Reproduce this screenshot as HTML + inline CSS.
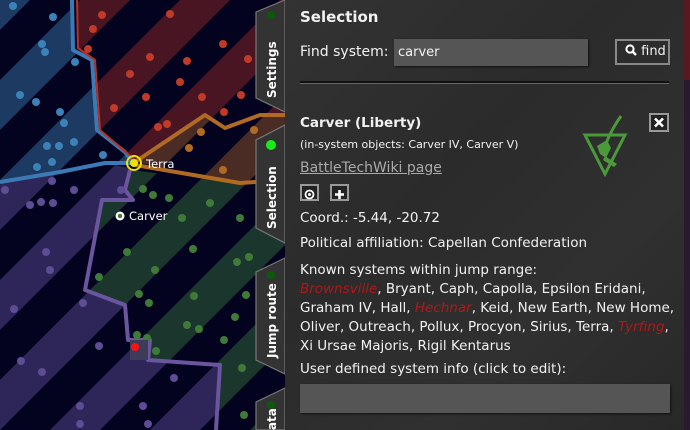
<!DOCTYPE html>
<html><head><meta charset="utf-8"><style>
*{margin:0;padding:0;box-sizing:border-box}
html,body{width:690px;height:430px;overflow:hidden}
body{background:#03031f;font-family:"DejaVu Sans","Liberation Sans",sans-serif;position:relative}
#map{position:absolute;left:0;top:0}
#panel{position:absolute;left:285px;top:0;width:399px;height:430px;overflow:hidden;background:linear-gradient(135deg,#333 0%,#2b2b2b 40%,#303030 70%,#282828 100%);color:#f2f2f2}
.t{position:absolute;white-space:nowrap}
.red{color:#b01818;font-style:italic}
</style></head><body>
<svg id="map" width="690" height="430" viewBox="0 0 690 430">
<rect width="690" height="430" fill="#03031f"/>
<polygon points="0,0 72,0 73,50 92,60 97,130 125,152 133,163 105,163 60,172 0,182" fill="#1c3a62"/>
<polygon points="76,0 285,0 285,115 260,115 225,128 205,115 135,160 100,130 95,60 78,48" fill="#4a1522"/>
<polygon points="135,162 205,115 225,128 260,115 285,115 285,180 240,183" fill="#4a2c24"/>
<polygon points="130,170 240,183 285,180 285,430 215,430 220,365 148,360 150,340 128,340 125,305 85,290 102,200 133,200 125,190" fill="#1b362c"/>
<polygon points="0,182 60,172 105,163 130,168 125,190 133,200 102,200 85,290 125,305 128,340 150,340 148,360 220,365 215,430 0,430" fill="#2e2658"/>
<g fill="#03031f">
<polygon points="0,30 30,0 80,0 0,80"/>
<polygon points="0,130 130,0 180,0 0,180"/>
<polygon points="0,230 230,0 280,0 0,280"/>
<polygon points="0,330 285,45 285,95 0,380"/>
<polygon points="0,430 285,145 285,195 50,430"/>
<polygon points="100,430 285,245 285,295 150,430"/>
<polygon points="200,430 285,345 285,395 250,430"/>
</g>
<g fill="none" stroke-width="4" stroke-linejoin="round">
<polyline points="72,0 73,50 92,60 97,130 125,152 133,163 105,163 60,172 0,182" stroke="#3b7ab5"/>
<polyline points="77,0 78,48 95,60 100,130 135,160" stroke="#b83020" stroke-width="2"/>
<polyline points="135,162 205,115 225,128 260,115 285,115" stroke="#b06a22"/>
<polyline points="135,165 240,183 285,180" stroke="#b06a22"/>
<polyline points="130,170 125,190 133,200 102,200 85,290 125,305 128,340 150,340 148,360 220,365 216,430" stroke="#6a559e"/>
</g>
<g fill="#3b82b8"><circle cx="53" cy="17" r="4"/><circle cx="42" cy="44" r="4"/><circle cx="45" cy="52" r="4"/><circle cx="75" cy="62" r="4"/><circle cx="20" cy="95" r="4"/><circle cx="36" cy="102" r="4"/><circle cx="60" cy="112" r="4"/><circle cx="64" cy="123" r="4"/><circle cx="47" cy="146" r="4"/><circle cx="59" cy="146" r="4"/><circle cx="74" cy="142" r="4"/><circle cx="37" cy="167" r="4"/><circle cx="52" cy="162" r="4"/><circle cx="103" cy="155" r="4"/><circle cx="13" cy="6" r="4"/></g>
<g fill="#c03a28"><circle cx="102" cy="15" r="4"/><circle cx="170" cy="14" r="4"/><circle cx="93" cy="29" r="4"/><circle cx="88" cy="49" r="4"/><circle cx="150" cy="57" r="4"/><circle cx="187" cy="61" r="4"/><circle cx="223" cy="44" r="4"/><circle cx="248" cy="59" r="4"/><circle cx="130" cy="74" r="4"/><circle cx="180" cy="82" r="4"/><circle cx="146" cy="97" r="4"/><circle cx="202" cy="97" r="4"/><circle cx="241" cy="95" r="4"/><circle cx="114" cy="108" r="4"/><circle cx="224" cy="112" r="4"/><circle cx="158" cy="127" r="4"/><circle cx="167" cy="124" r="4"/></g>
<g fill="#b06a22"><circle cx="201" cy="132" r="4"/><circle cx="254" cy="130" r="4"/><circle cx="189" cy="148" r="4"/><circle cx="223" cy="170" r="4"/></g>
<g fill="#3f7a38"><circle cx="143" cy="189" r="4"/><circle cx="153" cy="195" r="4"/><circle cx="169" cy="198" r="4"/><circle cx="210" cy="203" r="4"/><circle cx="182" cy="218" r="4"/><circle cx="240" cy="218" r="4"/><circle cx="127" cy="252" r="4"/><circle cx="193" cy="249" r="4"/><circle cx="237" cy="262" r="4"/><circle cx="249" cy="257" r="4"/><circle cx="155" cy="270" r="4"/><circle cx="99" cy="277" r="4"/><circle cx="139" cy="294" r="4"/><circle cx="149" cy="303" r="4"/><circle cx="194" cy="296" r="4"/><circle cx="246" cy="295" r="4"/><circle cx="187" cy="325" r="4"/><circle cx="199" cy="329" r="4"/><circle cx="235" cy="317" r="4"/><circle cx="224" cy="340" r="4"/><circle cx="137" cy="335" r="4"/><circle cx="147" cy="338" r="4"/><circle cx="156" cy="351" r="4"/><circle cx="242" cy="368" r="4"/><circle cx="244" cy="415" r="4"/></g>
<g fill="#5e4c94"><circle cx="5" cy="190" r="4"/><circle cx="52" cy="181" r="4"/><circle cx="74" cy="190" r="4"/><circle cx="30" cy="205" r="4"/><circle cx="41" cy="202" r="4"/><circle cx="53" cy="203" r="4"/><circle cx="121" cy="190" r="4"/><circle cx="46" cy="252" r="4"/><circle cx="50" cy="270" r="4"/><circle cx="83" cy="303" r="4"/><circle cx="14" cy="309" r="4"/><circle cx="99" cy="346" r="4"/><circle cx="21" cy="361" r="4"/><circle cx="42" cy="372" r="4"/><circle cx="174" cy="378" r="4"/><circle cx="80" cy="406" r="4"/><circle cx="143" cy="406" r="4"/><circle cx="80" cy="424" r="4"/><circle cx="148" cy="424" r="4"/></g>
<rect x="130" y="340" width="18" height="20" fill="#3c3c58"/>
<circle cx="135" cy="347" r="4" fill="#ff1010"/>
<circle cx="134" cy="163" r="7" fill="none" stroke="#f0e000" stroke-width="2"/>
<circle cx="134" cy="163" r="4" fill="#f0e000"/>
<text x="146" y="168" fill="#fff" font-family="DejaVu Sans, sans-serif" font-size="11.5">Terra</text>
<circle cx="120" cy="216" r="4.5" fill="#fff"/><circle cx="120" cy="216" r="2.2" fill="#3f7a38"/>
<text x="129" y="220" fill="#fff" font-family="DejaVu Sans, sans-serif" font-size="11.5">Carver</text>
<rect x="684" y="0" width="6" height="430" fill="#2a1a30"/>
<rect x="684" y="0" width="6" height="80" fill="#5a1820"/>
<g stroke="#777" stroke-width="1.2" fill="#333">
<polygon points="285,0 256,12 256,98 285,112"/>
<polygon points="285,125 256,140 256,228 285,243"/>
<polygon points="285,258 256,272 256,360 285,374"/>
<polygon points="285,388 256,402 256,430 285,430"/>
</g>
<circle cx="271" cy="15" r="4" fill="#0b5a0b"/>
<circle cx="271" cy="145" r="5" fill="#1aea1a"/>
<circle cx="271" cy="275" r="4" fill="#0b5a0b"/>
<circle cx="271" cy="405" r="4" fill="#0b5a0b"/>
<g fill="#fff" font-family="DejaVu Sans, sans-serif" font-size="12" font-weight="bold">
<text transform="translate(276,98) rotate(-90)">Settings</text>
<text transform="translate(276,229) rotate(-90)">Selection</text>
<text transform="translate(276,358) rotate(-90)">Jump route</text>
<text transform="translate(276,440) rotate(-90)">Data</text>
</g>
</svg>
<div id="panel">
<div class="t" style="left:15px;top:8px;font-size:15px;font-weight:bold">Selection</div>
<div class="t" style="left:15px;top:44px;font-size:14px">Find system:</div>
<div class="t" style="left:109px;top:39px;width:194px;height:27px;background:#555;box-shadow:1px 1px 2px #111;font-size:13px;padding:6px 4px">carver</div>
<div class="t" style="left:330px;top:39px;width:55px;height:26px;border:2px solid #888;font-size:13px;padding:3px 0 0 8px"><svg width="12" height="12" viewBox="0 0 12 12" style="vertical-align:-1px"><circle cx="5" cy="5" r="3.6" fill="none" stroke="#fff" stroke-width="2"/><line x1="7.5" y1="7.5" x2="11" y2="11" stroke="#fff" stroke-width="2.4"/></svg> find</div>
<div class="t" style="left:15px;top:81px;width:369px;height:3px;background:#111;border-bottom:1px solid #666"></div>
<div class="t" style="left:15px;top:115px;font-size:13.5px;font-weight:bold">Carver (Liberty)</div>
<div class="t" style="left:15px;top:138px;font-size:11px">(in-system objects: Carver IV, Carver V)</div>
<div class="t" style="left:15px;top:160px;font-size:14px;color:#aaa;text-decoration:underline">BattleTechWiki page</div>
<div class="t" style="left:15px;top:184px;width:19px;height:17px;border:2px solid #999;background:#222"><svg width="15" height="13" viewBox="0 0 15 13"><circle cx="7.5" cy="6.5" r="4" fill="none" stroke="#fff" stroke-width="1.8"/><circle cx="7.5" cy="6.5" r="1.5" fill="#fff"/></svg></div>
<div class="t" style="left:45px;top:184px;width:19px;height:17px;border:2px solid #999;background:#222"><svg width="15" height="13" viewBox="0 0 15 13"><path d="M7.5 2v9M3 6.5h9" stroke="#fff" stroke-width="2.6"/></svg></div>
<div class="t" style="left:364px;top:113px;width:20px;height:19px;border:2px solid #999;background:#222"><svg width="16" height="15" viewBox="0 0 16 15"><path d="M4 3.5l8 8M12 3.5l-8 8" stroke="#fff" stroke-width="2.6"/></svg></div>
<svg class="t" style="left:296px;top:112px" width="50" height="65" viewBox="0 0 50 65"><path d="M4 23h40L24 62z" fill="none" stroke="#4a9a3a" stroke-width="3"/><path d="M40 4Q30 18 24 34" fill="none" stroke="#4a9a3a" stroke-width="3"/><path d="M16 34l10-6 4 8-5 10-6-4zM24 44l12 8-3 3-11-7z" fill="#4a9a3a"/></svg>
<div class="t" style="left:15px;top:210px;font-size:13.5px">Coord.: -5.44, -20.72</div>
<div class="t" style="left:15px;top:235px;font-size:13.5px">Political affiliation: Capellan Confederation</div>
<div class="t" style="left:15px;top:261px;font-size:13.5px;line-height:19px;white-space:normal;width:384px">Known systems within jump range:<br><span class="red">Brownsville</span>, Bryant, Caph, Capolla, Epsilon Eridani,<br>Graham IV, Hall, <span class="red">Hechnar</span>, Keid, New Earth, New Home,<br>Oliver, Outreach, Pollux, Procyon, Sirius, Terra, <span class="red">Tyrfing</span>,<br>Xi Ursae Majoris, Rigil Kentarus</div>
<div class="t" style="left:15px;top:361px;font-size:13.5px">User defined system info (click to edit):</div>
<div class="t" style="left:15px;top:384px;width:370px;height:29px;background:#555;box-shadow:1px 1px 2px #111"></div>
</div>
</body></html>
